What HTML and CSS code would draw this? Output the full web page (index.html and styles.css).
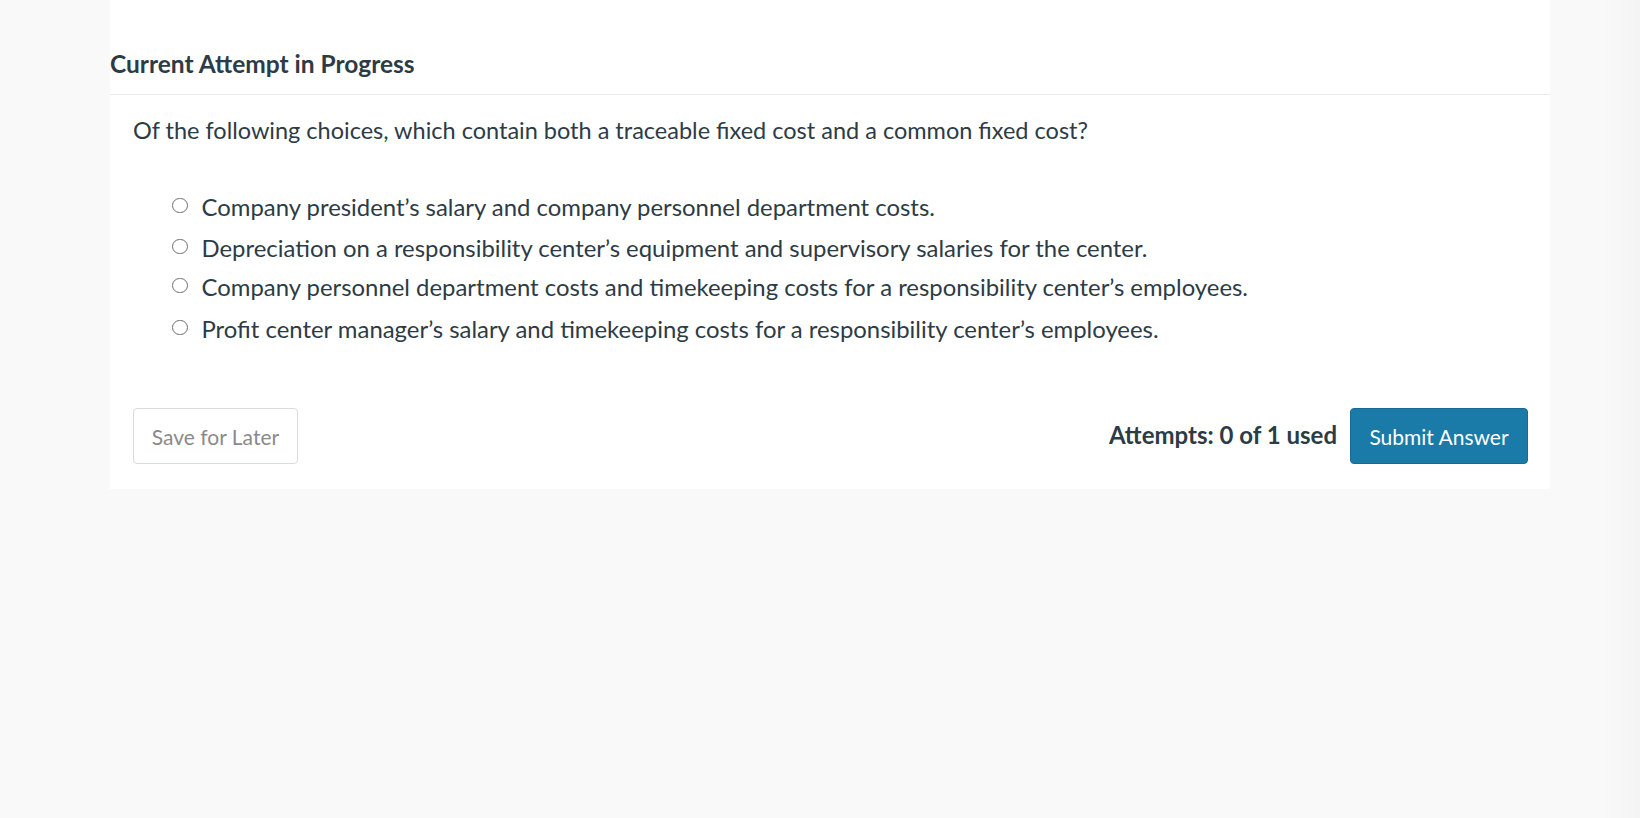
FILE: index.html
```html
<!DOCTYPE html>
<html lang="en">
<head>
<meta charset="utf-8">
<title>Current Attempt in Progress</title>
<link rel="stylesheet" href="styles.css">
</head>
<body>
<div class="page">
  <section class="card">
    <header class="card-header">
      <h2 class="title">Current Attempt in Progress</h2>
    </header>
    <div class="card-body">
      <p class="question">Of the following choices, which contain both a traceable fixed cost and a common fixed cost?</p>
      <ul class="options">
        <li class="option"><span class="radio"></span><span>Company president’s salary and company personnel department costs.</span></li>
        <li class="option"><span class="radio"></span><span>Depreciation on a responsibility center’s equipment and supervisory salaries for the center.</span></li>
        <li class="option"><span class="radio"></span><span>Company personnel department costs and timekeeping costs for a responsibility center’s employees.</span></li>
        <li class="option"><span class="radio"></span><span>Profit center manager’s salary and timekeeping costs for a responsibility center’s employees.</span></li>
      </ul>
      <div class="actions">
        <button class="btn btn-secondary">Save for Later</button>
        <div class="actions-right">
          <span class="attempts">Attempts: 0 of 1 used</span>
          <button class="btn btn-primary">Submit Answer</button>
        </div>
      </div>
    </div>
  </section>
  <div class="edge"></div>
</div>
</body>
</html>
```
FILE: styles.css
```css
html, body {
  margin: 0;
  padding: 0;
}
body {
  background: #f9f9f9;
  font-family: Lato, "Open Sans", "Liberation Sans", sans-serif;
  color: #2d3b45;
  height: 818px;
  overflow: hidden;
}
.page {
  display: flex;
  height: 818px;
}
.card {
  margin-left: 110px;
  width: 1440px;
  background: #ffffff;
  align-self: flex-start;
}
.edge {
  margin-left: auto;
  width: 40px;
  background: linear-gradient(to right, #f9f9f9, #f4f4f4);
}
.card-header {
  height: 95px;
  border-bottom: 1px solid #e8eaec;
  box-sizing: border-box;
}
.title {
  margin: 0;
  padding-top: 49px;
  font-size: 24.5px;
  line-height: 30px;
  font-weight: 700;
  color: #2d3b45;
}
.card-body {
  padding: 20px 22px 25px 23px;
}
.question {
  margin: 0;
  font-size: 23.5px;
  line-height: 30px;
}
.options {
  list-style: none;
  margin: 41px 0 0 0;
  padding: 0 0 0 39px;
}
.option {
  display: flex;
  align-items: center;
  gap: 14px;
  font-size: 23.9px;
  line-height: 41px;
  height: 41px;
}
.option:nth-child(3) {
  margin-top: -2px;
  margin-bottom: 1px;
}
.radio {
  width: 13.5px;
  height: 13.5px;
  border: 1.2px solid #6e6e6e;
  border-radius: 50%;
  flex: none;
  margin-top: -2px;
}
.actions {
  margin-top: 59px;
  display: flex;
  justify-content: space-between;
  align-items: center;
}
.actions-right {
  display: flex;
  align-items: center;
  gap: 13px;
}
.attempts {
  font-size: 24px;
  font-weight: 700;
  color: #2d3b45;
  padding-bottom: 4px;
}
.btn {
  font-family: inherit;
  font-size: 21px;
  height: 56px;
  border-radius: 4px;
  padding: 0 17px;
  cursor: pointer;
}
.btn-secondary {
  background: #ffffff;
  border: 1px solid #d9dcde;
  color: #8a8a8a;
  width: 165px;
}
.btn-secondary:hover {
  background: #fafafa;
}
.btn-primary {
  background: #1a7aa8;
  border: 1px solid #166a93;
  color: #ffffff;
  width: 178px;
}
```
